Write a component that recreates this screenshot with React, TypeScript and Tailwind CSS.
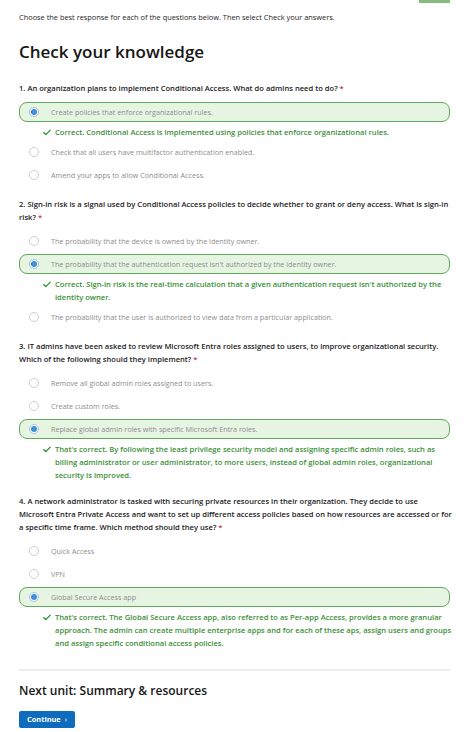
import { Fragment } from "react";

type Q = {
  n: number;
  q: string;
  options: string[];
  selected: number;
  feedback: string;
};

const questions: Q[] = [
  {
    n: 1,
    q: "An organization plans to implement Conditional Access. What do admins need to do?",
    options: [
      "Create policies that enforce organizational rules.",
      "Check that all users have multifactor authentication enabled.",
      "Amend your apps to allow Conditional Access.",
    ],
    selected: 0,
    feedback: "Correct. Conditional Access is implemented using policies that enforce organizational rules.",
  },
  {
    n: 2,
    q: "Sign-in risk is a signal used by Conditional Access policies to decide whether to grant or deny access. What is sign-in risk?",
    options: [
      "The probability that the device is owned by the identity owner.",
      "The probability that the authentication request isn't authorized by the identity owner.",
      "The probability that the user is authorized to view data from a particular application.",
    ],
    selected: 1,
    feedback: "Correct. Sign-in risk is the real-time calculation that a given authentication request isn't authorized by the identity owner.",
  },
  {
    n: 3,
    q: "IT admins have been asked to review Microsoft Entra roles assigned to users, to improve organizational security. Which of the following should they implement?",
    options: [
      "Remove all global admin roles assigned to users.",
      "Create custom roles.",
      "Replace global admin roles with specific Microsoft Entra roles.",
    ],
    selected: 2,
    feedback:
      "That's correct. By following the least privilege security model and assigning specific admin roles, such as billing administrator or user administrator, to more users, instead of global admin roles, organizational security is improved.",
  },
  {
    n: 4,
    q: "A network administrator is tasked with securing private resources in their organization. They decide to use\nMicrosoft Entra Private Access and want to set up different access policies based on how resources are accessed or for a specific time frame. Which method should they use?",
    options: ["Quick Access", "VPN", "Global Secure Access app"],
    selected: 2,
    feedback:
      "That's correct. The Global Secure Access app, also referred to as Per-app Access, provides a more granular approach. The admin can create multiple enterprise apps and for each of these aps, assign users and groups and assign specific conditional access policies.",
  },
];

function Radio({ on }: { on: boolean }) {
  if (on) {
    return (
      <span className="w-[10px] h-[10px] rounded-full border border-[#a6c4df] bg-white flex items-center justify-center shrink-0">
        <span className="w-[6px] h-[6px] rounded-full bg-[#3d8fd8]" />
      </span>
    );
  }
  return <span className="w-[10px] h-[10px] rounded-full border border-[#cfcfcf] bg-white shrink-0" />;
}

function Check() {
  return (
    <svg viewBox="0 0 10 8" className="w-[8px] h-[7px] shrink-0 mt-[3px]" fill="none">
      <path d="M1 4.2 L3.6 6.6 L9 1" stroke="#2e8b2e" strokeWidth="1.6" strokeLinecap="round" strokeLinejoin="round" />
    </svg>
  );
}

export default function App() {
  return (
    <div className="w-[474px] min-h-[732px] bg-white font-['Open_Sans','Noto_Sans',sans-serif] text-[#1b1b1b] px-[19px] pr-[24px] pb-[10px]">
      <div className="flex justify-end">
        <span className="w-[31px] h-[3px] bg-[#86bd7d]" />
      </div>
      <p className="text-[7.4px] leading-[13px] mt-[8px] text-[#262626]">
        Choose the best response for each of the questions below. Then select Check your answers.
      </p>
      <h1 className="text-[17px] leading-[22px] font-semibold mt-[17px] text-[#161616]">Check your knowledge</h1>

      <div className="flex flex-col gap-[13px] mt-[19px]">
        {questions.map((q) => (
          <div key={q.n}>
            <p className="text-[7.6px] leading-[13px] font-semibold text-[#222] -mr-[8px] whitespace-pre-line after:content-['*'] after:text-[#c4314b]">
              {`${q.n}. ${q.q} `}
            </p>
            <div className="flex flex-col gap-[3px] mt-[7px]">
              {q.options.map((o, i) => (
                <Fragment key={i}>
                  <div
                    className={
                      i === q.selected
                        ? "h-[20px] flex items-center gap-[12px] pl-[9px] rounded-[8px] border border-[#62a85c] bg-[#e6f5e2]"
                        : "h-[20px] flex items-center gap-[12px] pl-[10px]"
                    }
                  >
                    <Radio on={i === q.selected} />
                    <span className="text-[7.2px] text-[#8d8d8d]">{o}</span>
                  </div>
                  {i === q.selected && (
                    <div className="flex items-start gap-[4px] pl-[24px] -mr-[8px] mt-[1px]">
                      <Check />
                      <p className="text-[7.6px] leading-[13px] font-semibold text-[#3b8f37]">{q.feedback}</p>
                    </div>
                  )}
                </Fragment>
              ))}
            </div>
          </div>
        ))}
      </div>

      <div className="h-[2px] bg-[#ececec] mt-[19px]" />
      <h2 className="text-[12px] leading-[16px] font-semibold mt-[12px] text-[#161616]">Next unit: Summary &amp; resources</h2>
      <button className="mt-[12px] h-[17px] w-[56px] bg-[#0f6cbd] text-white text-[7.4px] font-bold rounded-[2px] flex items-center justify-center gap-[4px] after:content-['›'] after:font-normal">
        Continue
      </button>
    </div>
  );
}
